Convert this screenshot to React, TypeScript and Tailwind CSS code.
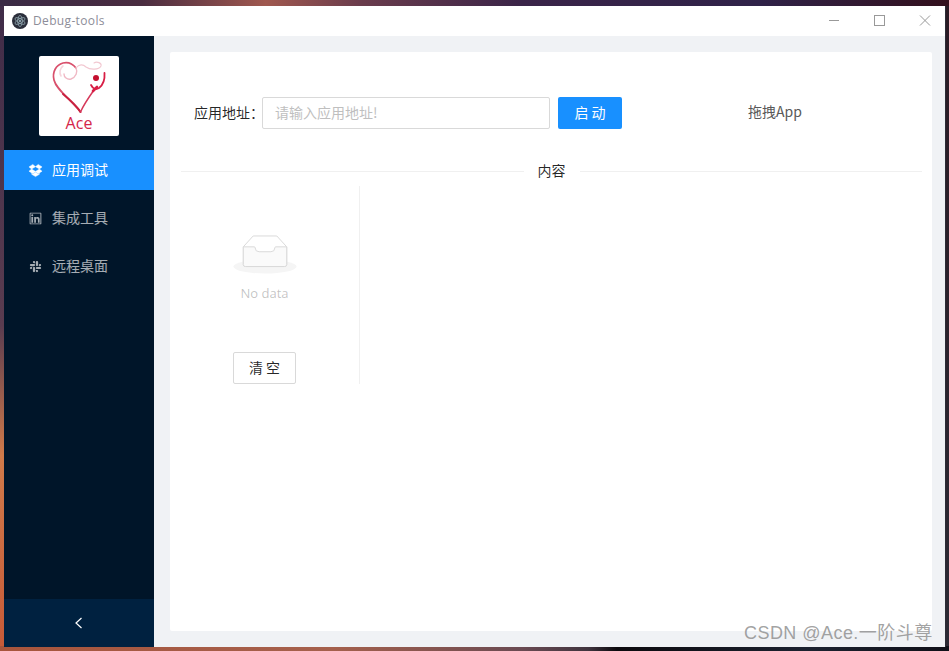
import React from "react";
import { AiOutlineDropbox, AiOutlineLinkedin, AiOutlineSlack } from "react-icons/ai";

const font = "font-['Noto_Sans_CJK_SC','Microsoft_YaHei',sans-serif]";

function Electron() {
  return (
    <svg width="16" height="16" viewBox="0 0 16 16" className="shrink-0">
      <circle cx="8" cy="8" r="8" fill="#2b2e3b" />
      <g fill="none" stroke="#a9c4cc" strokeWidth="0.6">
        <ellipse cx="8" cy="8" rx="5.600" ry="2.200" transform="rotate(30 8 8)" />
        <ellipse cx="8" cy="8" rx="5.600" ry="2.200" transform="rotate(90 8 8)" />
        <ellipse cx="8" cy="8" rx="5.600" ry="2.200" transform="rotate(150 8 8)" />
      </g>
      <circle cx="8" cy="8" r="1" fill="#a9c4cc" />
    </svg>
  );
}

function Logo() {
  return (
    <div className="flex h-20 w-20 flex-col items-center rounded-[2px] bg-white">
      <svg width="80" height="58" viewBox="0 0 80 58" className="shrink-0">
        <g fill="none" strokeLinecap="round" strokeLinejoin="round">
          <path d="M37 12 C33 7 28 6 24 7 C17 9 13 16 15 24 C17 33 30 42 41.500 56" stroke="#d9506c" strokeWidth="1.700" />
          <path d="M24 38 C30 43 37 49 41.500 56" stroke="#c8213f" strokeWidth="2" />
          <path d="M37 12 C39 16 37 21 32 23 C28 24 25 21 25 18" stroke="#f0b8c4" strokeWidth="1.400" />
          <path d="M24 10 C21 12 20 17 22 20" stroke="#f6d5dc" strokeWidth="1.600" />
          <path d="M37 12 C40 8 44 8 47 11 C51 14 60 14 62 10 C63 7 58 5 55 7" stroke="#f2c8d1" strokeWidth="1.100" />
          <path d="M41.500 56 C45 48 50 41 55 34" stroke="#d6395a" strokeWidth="1.500" />
          <path d="M52 29 C54 33 57 34 60 32 C64 29 66 24 65.500 17" stroke="#d81e45" strokeWidth="1.800" />
          <path d="M54 35 L58 31" stroke="#d81e45" strokeWidth="2.600" />
        </g>
        <circle cx="57" cy="22" r="3" fill="#c4102f" />
      </svg>
      <span className="font-['Open_Sans',sans-serif] text-[16px] leading-[18px] font-medium text-[#d4264a]">Ace</span>
    </div>
  );
}

function Item({ icon, label, active }: { icon: React.ReactNode; label: string; active?: boolean }) {
  return (
    <div className={active ? "mb-2 flex h-10 items-center gap-[9px] bg-[#1890ff] pl-6 text-white" : "mb-2 flex h-10 items-center gap-[9px] pl-6 text-white/65"}>
      <span className="text-[15px] leading-none">{icon}</span>
      <span className="mb-[2px] text-[14px] leading-[22px]">{label}</span>
    </div>
  );
}

export default function App() {
  return (
    <div className={`relative h-[651px] w-[949px] overflow-hidden pb-1 pl-1 pr-[3px] pt-[6px] [background:linear-gradient(90deg,#3a2a45_0%,#4a2c40_15%,#a0584f_28%,#6a3c4c_38%,#3a2448_55%,#2f2248_80%,#33101c_100%)_top/100%_6px_no-repeat,linear-gradient(90deg,#a8553c_0%,#a5604c_35%,#6a4a52_55%,#40343e_62%,#0c0a0e_65%,#1c2230_85%,#101018_100%)_bottom/100%_5px_no-repeat,linear-gradient(180deg,#3f2c48_0%,#5a3c50_50%,#d07a4a_70%,#c65a38_100%)_left/4px_100%_no-repeat,linear-gradient(180deg,#2a1a24_0%,#2c2a34_100%)_right/4px_100%_no-repeat] ${font}`}>
      <div className="flex h-[641px] w-[942px] flex-col border-r border-[#2c2c36]">
        <div className="flex h-[30px] items-center bg-white pl-2">
          <Electron />
          <span className="ml-[5px] font-['Open_Sans',sans-serif] text-[12px] tracking-[0.35px] text-[#8d8d98]">Debug-tools</span>
          <div className="ml-auto flex items-center">
            <svg width="45" height="30" viewBox="0 0 45 30" className="block"><path d="M18 14.500h10" stroke="#999" /></svg>
            <svg width="47" height="30" viewBox="0 0 47 30" className="block"><rect x="18.500" y="9.500" width="10" height="10" fill="none" stroke="#999" /></svg>
            <svg width="42" height="30" viewBox="0 0 42 30" className="block"><path d="M17 9.500l10 10M27 9.500l-10 10" stroke="#999" /></svg>
          </div>
        </div>
        <div className="flex min-h-0 flex-1">
          <aside className="flex w-[150px] flex-col bg-[#001529]">
            <div className="flex justify-center pb-[14px] pt-5">
              <Logo />
            </div>
            <Item active icon={<AiOutlineDropbox strokeWidth={30} />} label="应用调试" />
            <Item icon={<AiOutlineLinkedin />} label="集成工具" />
            <Item icon={<AiOutlineSlack />} label="远程桌面" />
            <div className="mt-auto flex h-12 items-center justify-center bg-[#002140]">
              <svg width="12" height="12" viewBox="0 0 12 12"><path d="M8.500 1L3 6l5.500 5" fill="none" stroke="#fff" strokeWidth="1.200" /></svg>
            </div>
          </aside>
          <main className="flex-1 bg-[#f0f2f5] pb-4 pl-4 pr-[13px] pt-4">
            <div className="h-full rounded-[2px] bg-white pl-[11px] pr-[10px] pt-[45px]">
              <div className="flex h-8 items-center">
                <span className="mb-[1px] ml-[13px] w-[68px] whitespace-nowrap text-[14px] text-black/85">应用地址：</span>
                <div className="flex h-8 w-[288px] items-center rounded-[2px] border border-[#d9d9d9] pb-[2px] pl-3 text-[14px] text-[#bfbfbf]">请输入应用地址!</div>
                <div className="ml-2 flex h-8 w-16 items-center justify-center rounded-[2px] bg-[#1890ff] pb-[1px] text-[14px] text-white">启 动</div>
                <span className="mb-[3px] ml-[126px] text-[14px] text-[#595959]">拖拽App</span>
              </div>
              <div className="mt-[27px] flex h-[30px] items-center">
                <div className="h-px flex-1 bg-[#f0f0f0]" />
                <span className="mb-[1px] px-[14px] text-[14px] text-black/85">内容</span>
                <div className="h-px flex-1 bg-[#f0f0f0]" />
              </div>
              <div className="flex h-[198px] w-[179px] flex-col items-center border-r border-[#f0f0f0] pr-[11px]">
                <svg width="64" height="41" viewBox="0 0 64 41" className="mt-[48px]">
                  <ellipse cx="32" cy="33" rx="32" ry="7" fill="#f5f5f5" />
                  <g stroke="#d9d9d9" fill="#fafafa">
                    <path d="M10 13 L20 2 H44 L54 13 V31 a2 2 0 0 1 -2 2 H12 a2 2 0 0 1 -2 -2 Z" fill="#fff" />
                    <path d="M10 13 H21 a1 1 0 0 1 1 1 a4 4 0 0 0 4 4 H38 a4 4 0 0 0 4 -4 a1 1 0 0 1 1 -1 H54 V31 a2 2 0 0 1 -2 2 H12 a2 2 0 0 1 -2 -2 Z" />
                  </g>
                </svg>
                <span className="mt-[9px] font-['Open_Sans',sans-serif] text-[13px] leading-5 text-black/25">No data</span>
                <div className="mt-[49px] flex h-8 w-[63px] items-center justify-center rounded-[2px] border border-[#d9d9d9] pb-[1px] text-[14px] text-black/85">清 空</div>
              </div>
            </div>
          </main>
        </div>
      </div>
      <span className="absolute left-[744px] top-[619px] whitespace-nowrap font-['Liberation_Sans','Noto_Sans_CJK_SC',sans-serif] text-[18px] leading-7 tracking-[0.45px] text-[#8a8a8a]/80">CSDN @Ace.一阶斗尊</span>
    </div>
  );
}
